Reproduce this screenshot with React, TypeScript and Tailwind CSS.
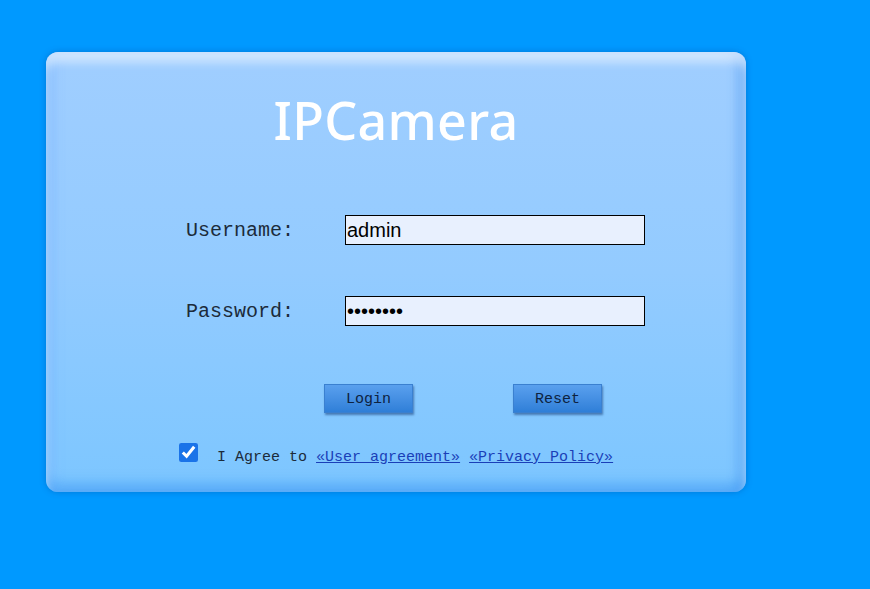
import { useState } from "react";

const mono = { fontFamily: '"Liberation Mono", "DejaVu Sans Mono", monospace' };
const sans = { fontFamily: '"Liberation Sans", Arial, sans-serif' };

export default function App() {
  const [user, setUser] = useState("admin");
  const [pass, setPass] = useState("12345678");
  const [agree, setAgree] = useState(true);

  return (
    <div className="min-h-[589px] w-full bg-[#0099ff] pt-[52px] pl-[46px]">
      <div className="w-[700px] h-[440px] rounded-[12px] bg-gradient-to-b from-[#a0ceff] via-[#93cbff] to-[#7cc6ff] shadow-[0_0_6px_rgba(0,60,140,0.35),inset_0_10px_10px_rgba(255,255,255,0.55),inset_0_-10px_12px_rgba(40,140,240,0.35),inset_10px_0_10px_rgba(120,180,255,0.25),inset_-10px_0_10px_rgba(60,140,240,0.3)] flex flex-col">
        <div
          className="mt-[33px] text-center text-white text-[52px] font-medium leading-[70px] tracking-[0.3px]"
          style={{ fontFamily: '"Noto Sans", "Open Sans", sans-serif' }}
        >
          IPCamera
        </div>

        <div className="mt-[60px] pl-[140px] flex flex-col gap-[51px]">
          <div className="flex items-center h-[30px]">
            <label className="w-[159px] text-[20px] text-[#1c2b3a] pt-[2px]" style={mono}>
              Username:
            </label>
            <input
              value={user}
              onChange={(e) => setUser(e.target.value)}
              className="w-[300px] h-[30px] border border-black bg-[#e8f0fe] px-[1px] text-[20px] text-black outline-none"
              style={sans}
            />
          </div>
          <div className="flex items-center h-[30px]">
            <label className="w-[159px] text-[20px] text-[#1c2b3a] pt-[2px]" style={mono}>
              Password:
            </label>
            <input
              type="password"
              value={pass}
              onChange={(e) => setPass(e.target.value)}
              className="w-[300px] h-[30px] border border-black bg-[#e8f0fe] px-[1px] text-[20px] text-black outline-none"
              style={sans}
            />
          </div>
        </div>

        <div className="mt-[58px] pl-[278px] flex gap-[100px]">
          <button
            className="w-[89px] h-[29px] bg-gradient-to-b from-[#5aa0ee] to-[#2f7fd8] border border-[#3a80d0] shadow-[1px_2px_2px_rgba(20,60,120,0.55)] text-[15px] text-[#0d2240] pt-[3px]"
            style={mono}
          >
            Login
          </button>
          <button
            className="w-[89px] h-[29px] bg-gradient-to-b from-[#5aa0ee] to-[#2f7fd8] border border-[#3a80d0] shadow-[1px_2px_2px_rgba(20,60,120,0.55)] text-[15px] text-[#0d2240] pt-[3px]"
            style={mono}
          >
            Reset
          </button>
        </div>

        <div className="mt-[30px] pl-[133px] flex items-start gap-[19px]">
          <input
            type="checkbox"
            checked={agree}
            onChange={(e) => setAgree(e.target.checked)}
            className="w-[19px] h-[19px] accent-[#1a73e8] m-0"
          />
          <span className="mt-[5px] text-[15px] leading-[20px] text-[#1c2b3a]" style={mono}>
            I Agree to{" "}
            <a href="#" className="underline text-[#1a3fb8]">
              «User agreement»
            </a>{" "}
            <a href="#" className="underline text-[#1a3fb8]">
              «Privacy Policy»
            </a>
          </span>
        </div>
      </div>
    </div>
  );
}
